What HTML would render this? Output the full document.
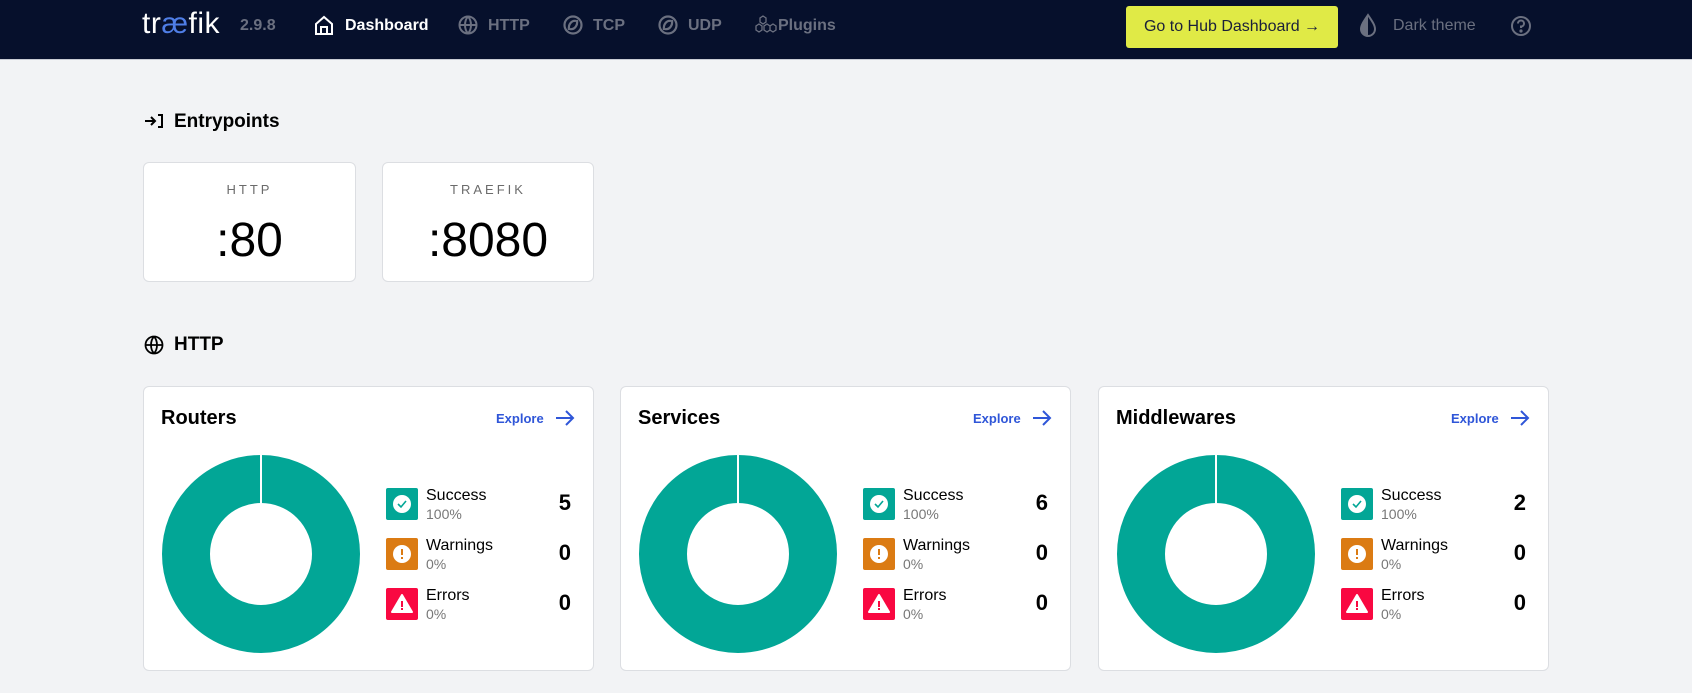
<!DOCTYPE html>
<html><head><meta charset="utf-8"><style>
*{margin:0;padding:0;box-sizing:border-box}
body{width:1692px;height:693px;background:#f2f3f5;font-family:"Liberation Sans",sans-serif;position:relative;overflow:hidden;color:#000}
.nav{position:absolute;left:0;top:0;width:1692px;height:60px;background:#06102c;border-bottom:1px solid #c8ccd4}
.a{position:absolute}
.nt{position:absolute;top:16px;font-size:16px;font-weight:bold;color:#6b7080;line-height:20px}
.card{position:absolute;background:#fff;border:1px solid #dcdee2;border-radius:6px}
.ep .lbl{position:absolute;top:19px;width:100%;text-align:center;font-size:13px;letter-spacing:3px;color:#6b6b6b}
.ep .val{position:absolute;top:50px;width:100%;text-align:center;font-size:48px;line-height:56px}
.h{position:absolute;font-size:19px;font-weight:bold}
.big{width:451px;height:285px;top:386px}
.big .t{position:absolute;left:17px;top:20px;font-size:20px;font-weight:bold}
.big .ex{position:absolute;left:352px;top:24px;font-size:13px;font-weight:bold;color:#2f56d8}
.big .ar{position:absolute;left:411px;top:22px}
.big .don{position:absolute;left:17px;top:67px}
.ic{position:absolute;left:242px;width:32px;height:32px;border-radius:2px}
.lb{position:absolute;left:282px;font-size:16px;line-height:18px}
.pc{position:absolute;left:282px;font-size:14px;color:#777;line-height:16px}
.cn{position:absolute;right:22px;font-size:22px;font-weight:bold;line-height:26px}
</style></head><body>
<div class="nav">
 <div class="a" style="left:142px;top:7px;font-size:30px;color:#fff;letter-spacing:0.5px">tr<span style="color:#4f7ee6">æ</span>fik</div>
 <div class="nt" style="left:240px">2.9.8</div>
 <svg class="a" style="left:314px;top:15px" width="20" height="21" viewBox="0 0 20 21"><path d="M2 9L10 2L18 9V19H2Z M7 19V12H13V19" fill="none" stroke="#fff" stroke-width="2"/></svg>
 <div class="nt" style="left:345px;color:#fff">Dashboard</div>
 <svg class="a" style="left:458px;top:15px" width="20" height="20" viewBox="0 0 20 20" fill="none" stroke="#6b7080" stroke-width="2"><circle cx="10" cy="10" r="8.5"/><path d="M1.5 10H18.5M10 1.5C6 6 6 14 10 18.5M10 1.5C14 6 14 14 10 18.5"/></svg>
 <div class="nt" style="left:488px">HTTP</div>
 <svg class="a" style="left:563px;top:15px" width="20" height="20" viewBox="0 0 20 20" fill="none" stroke="#6b7080" stroke-width="2.2"><circle cx="10" cy="10" r="8.5"/><path d="M6 15C5 9 9 5 13 6M14 5C15 11 11 15 7 14"/></svg>
 <div class="nt" style="left:593px">TCP</div>
 <svg class="a" style="left:658px;top:15px" width="20" height="20" viewBox="0 0 20 20" fill="none" stroke="#6b7080" stroke-width="2.2"><circle cx="10" cy="10" r="8.5"/><path d="M6 15C5 9 9 5 13 6M14 5C15 11 11 15 7 14"/></svg>
 <div class="nt" style="left:688px">UDP</div>
 <svg class="a" style="left:755px;top:14px" width="22" height="22" viewBox="0 0 22 22" fill="none" stroke="#6b7080" stroke-width="1.3"><path d="M8 2L11 4V8L8 10L5 8V4Z M4 10L7 12V16L4 18L1 16V12Z M12 10L15 12V16L12 18L9 16V12Z M18 10L21 12V16L18 18L15 16V12Z"/></svg>
 <div class="nt" style="left:778px">Plugins</div>
 <div class="a" style="left:1126px;top:6px;width:212px;height:42px;background:#e0ea46;border-radius:3px;color:#1a1f3a;font-size:16px;line-height:42px;text-align:center">Go to Hub Dashboard →</div>
 <svg class="a" style="left:1358px;top:13px" width="20" height="26" viewBox="0 0 20 26"><path d="M10 2C6 8 3 12 3 16A7 7 0 0 0 17 16C17 12 14 8 10 2Z" fill="none" stroke="#6b7080" stroke-width="2"/><path d="M10 2C6 8 3 12 3 16A7 7 0 0 0 10 23Z" fill="#6b7080"/></svg>
 <div class="nt" style="left:1393px;font-weight:normal">Dark theme</div>
 <svg class="a" style="left:1510px;top:15px" width="22" height="22" viewBox="0 0 22 22" fill="none" stroke="#6b7080" stroke-width="2"><circle cx="11" cy="11" r="9"/><path d="M8 8.5A3 3 0 1 1 11 11.5V13"/><circle cx="11" cy="16" r="0.6" fill="#6b7080"/></svg>
</div>

<svg class="a" style="left:144px;top:113px" width="20" height="16" viewBox="0 0 20 16" fill="none" stroke="#000" stroke-width="2"><path d="M1 8H11M7 4L11 8L7 12M14 2H18V14H14"/></svg>
<div class="h" style="left:174px;top:111px">Entrypoints</div>

<div class="card ep" style="left:143px;top:162px;width:213px;height:120px"><div class="lbl">HTTP</div><div class="val">:80</div></div>
<div class="card ep" style="left:382px;top:162px;width:212px;height:120px"><div class="lbl">TRAEFIK</div><div class="val">:8080</div></div>

<svg class="a" style="left:144px;top:335px" width="20" height="20" viewBox="0 0 20 20" fill="none" stroke="#000" stroke-width="1.8"><circle cx="10" cy="10" r="8.5"/><path d="M1.5 10H18.5M10 1.5C6 6 6 14 10 18.5M10 1.5C14 6 14 14 10 18.5"/></svg>
<div class="h" style="left:174px;top:334px">HTTP</div>

<div class="card big" style="left:143px">
 <div class="t">Routers</div><div class="ex">Explore</div>
 <svg class="ar" width="20" height="18" viewBox="0 0 20 18" fill="none" stroke="#2f56d8" stroke-width="2"><path d="M1 9H18M11 2L18 9L11 16"/></svg>
 <svg class="don" width="200" height="200" viewBox="0 0 200 200"><circle cx="100" cy="100" r="75" fill="none" stroke="#02a696" stroke-width="48"/><rect x="99" y="0" width="2" height="52" fill="#fff"/></svg>
 <div class="ic" style="top:101px;background:#02a696"><svg width="32" height="32"><circle cx="16" cy="16" r="9" fill="#fff"/><path d="M12 16L15 19L20 13" fill="none" stroke="#02a696" stroke-width="1.6"/></svg></div>
 <div class="lb" style="top:100px">Success</div><div class="pc" style="top:119px">100%</div><div class="cn" style="top:103px">5</div>
 <div class="ic" style="top:151px;background:#db7b13"><svg width="32" height="32"><circle cx="16" cy="16" r="9" fill="#fff"/><rect x="15" y="11" width="2" height="6" fill="#db7b13"/><rect x="15" y="19" width="2" height="2" fill="#db7b13"/></svg></div>
 <div class="lb" style="top:150px">Warnings</div><div class="pc" style="top:169px">0%</div><div class="cn" style="top:153px">0</div>
 <div class="ic" style="top:201px;background:#f90841"><svg width="32" height="32"><path d="M16 7L26 24H6Z" fill="#fff" stroke="#fff" stroke-linejoin="round" stroke-width="2"/><rect x="15" y="13" width="2" height="6" fill="#f90841"/><rect x="15" y="20" width="2" height="2" fill="#f90841"/></svg></div>
 <div class="lb" style="top:200px">Errors</div><div class="pc" style="top:219px">0%</div><div class="cn" style="top:203px">0</div>
</div>

<div class="card big" style="left:620px">
 <div class="t">Services</div><div class="ex">Explore</div>
 <svg class="ar" width="20" height="18" viewBox="0 0 20 18" fill="none" stroke="#2f56d8" stroke-width="2"><path d="M1 9H18M11 2L18 9L11 16"/></svg>
 <svg class="don" width="200" height="200" viewBox="0 0 200 200"><circle cx="100" cy="100" r="75" fill="none" stroke="#02a696" stroke-width="48"/><rect x="99" y="0" width="2" height="52" fill="#fff"/></svg>
 <div class="ic" style="top:101px;background:#02a696"><svg width="32" height="32"><circle cx="16" cy="16" r="9" fill="#fff"/><path d="M12 16L15 19L20 13" fill="none" stroke="#02a696" stroke-width="1.6"/></svg></div>
 <div class="lb" style="top:100px">Success</div><div class="pc" style="top:119px">100%</div><div class="cn" style="top:103px">6</div>
 <div class="ic" style="top:151px;background:#db7b13"><svg width="32" height="32"><circle cx="16" cy="16" r="9" fill="#fff"/><rect x="15" y="11" width="2" height="6" fill="#db7b13"/><rect x="15" y="19" width="2" height="2" fill="#db7b13"/></svg></div>
 <div class="lb" style="top:150px">Warnings</div><div class="pc" style="top:169px">0%</div><div class="cn" style="top:153px">0</div>
 <div class="ic" style="top:201px;background:#f90841"><svg width="32" height="32"><path d="M16 7L26 24H6Z" fill="#fff" stroke="#fff" stroke-linejoin="round" stroke-width="2"/><rect x="15" y="13" width="2" height="6" fill="#f90841"/><rect x="15" y="20" width="2" height="2" fill="#f90841"/></svg></div>
 <div class="lb" style="top:200px">Errors</div><div class="pc" style="top:219px">0%</div><div class="cn" style="top:203px">0</div>
</div>

<div class="card big" style="left:1098px">
 <div class="t">Middlewares</div><div class="ex">Explore</div>
 <svg class="ar" width="20" height="18" viewBox="0 0 20 18" fill="none" stroke="#2f56d8" stroke-width="2"><path d="M1 9H18M11 2L18 9L11 16"/></svg>
 <svg class="don" width="200" height="200" viewBox="0 0 200 200"><circle cx="100" cy="100" r="75" fill="none" stroke="#02a696" stroke-width="48"/><rect x="99" y="0" width="2" height="52" fill="#fff"/></svg>
 <div class="ic" style="top:101px;background:#02a696"><svg width="32" height="32"><circle cx="16" cy="16" r="9" fill="#fff"/><path d="M12 16L15 19L20 13" fill="none" stroke="#02a696" stroke-width="1.6"/></svg></div>
 <div class="lb" style="top:100px">Success</div><div class="pc" style="top:119px">100%</div><div class="cn" style="top:103px">2</div>
 <div class="ic" style="top:151px;background:#db7b13"><svg width="32" height="32"><circle cx="16" cy="16" r="9" fill="#fff"/><rect x="15" y="11" width="2" height="6" fill="#db7b13"/><rect x="15" y="19" width="2" height="2" fill="#db7b13"/></svg></div>
 <div class="lb" style="top:150px">Warnings</div><div class="pc" style="top:169px">0%</div><div class="cn" style="top:153px">0</div>
 <div class="ic" style="top:201px;background:#f90841"><svg width="32" height="32"><path d="M16 7L26 24H6Z" fill="#fff" stroke="#fff" stroke-linejoin="round" stroke-width="2"/><rect x="15" y="13" width="2" height="6" fill="#f90841"/><rect x="15" y="20" width="2" height="2" fill="#f90841"/></svg></div>
 <div class="lb" style="top:200px">Errors</div><div class="pc" style="top:219px">0%</div><div class="cn" style="top:203px">0</div>
</div>
</body></html>
